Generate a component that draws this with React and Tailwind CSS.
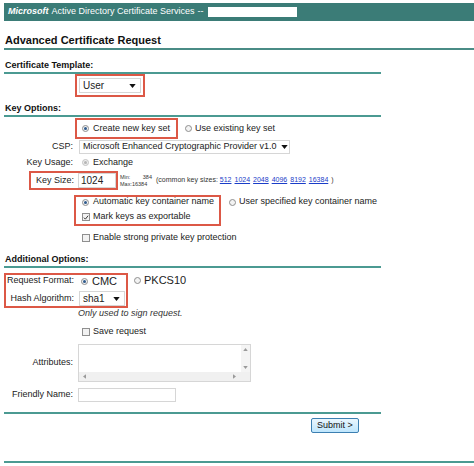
import React from "react";

// Advanced Certificate Request page (AD CS web enrollment), with red annotation boxes
const FONT = { fontFamily: '"Liberation Sans", Arial, sans-serif' };

function Radio({ checked, disabled }) {
  return (
    <span
      className={
        "inline-flex h-[7px] w-[7px] shrink-0 items-center justify-center rounded-full border " +
        (disabled ? "border-[#c4c4c4] bg-[#eeeeee]" : "border-[#8f8f8f] bg-[#f3f3f3]")
      }
    >
      {checked && (
        <span className={"h-[3px] w-[3px] rounded-full " + (disabled ? "bg-[#b5b5b5]" : "bg-[#2f5a8c]")} />
      )}
    </span>
  );
}

function Checkbox({ checked }) {
  return (
    <span className="inline-flex h-[8px] w-[8px] shrink-0 items-center justify-center border border-[#8f8f8f] bg-[#f2f2f2]">
      {checked && (
        <svg viewBox="0 0 8 8" className="h-[7px] w-[7px]">
          <path d="M1.2 4.2 L3.2 6.2 L6.8 1.6" fill="none" stroke="#333" strokeWidth="1.3" />
        </svg>
      )}
    </span>
  );
}

function Select({ children, className }) {
  return (
    <div
      className={
        "flex items-center justify-between border border-[#d6d6d6] bg-white pl-[3px] pr-[4px] text-[9px] text-[#222] " +
        className
      }
    >
      <span className="whitespace-nowrap">{children}</span>
      <svg viewBox="0 0 8 5" className="ml-[4px] h-[4px] w-[7px] shrink-0">
        <path d="M0 0 H8 L4 5 Z" fill="#111" />
      </svg>
    </div>
  );
}

function Section({ title, className }) {
  return (
    <div className={"flex h-[14px] w-[377px] items-center border-b-2 border-[#4b9a92] text-[9px] font-bold text-[#111] " + className}>
      {title}
    </div>
  );
}

function Label({ children, className }) {
  return <div className={"w-[70px] shrink-0 pr-[1px] text-right whitespace-nowrap " + (className || "")}>{children}</div>;
}

export default function App() {
  const sizes = ["512", "1024", "2048", "4096", "8192", "16384"];

  return (
    <div className="min-h-[466px] w-[474px] bg-white pl-[4px] pt-[3px] text-[9px] text-[#222]" style={FONT}>
      {/* banner */}
      <div className="flex h-[18px] items-center bg-[#3b7c77] pl-[4px] text-[9px] text-white">
        <span className="font-bold italic">Microsoft</span>
        <span className="ml-[3px]">Active Directory Certificate Services</span>
        <span className="ml-[3px]">--</span>
        <span className="ml-[4px] h-[10px] w-[89px] bg-white" />
      </div>

      <div className="mt-[12px] flex h-[17px] items-center border-b-2 border-[#4a8c86] pl-[1px] text-[11px] font-bold text-[#111]">
        Advanced Certificate Request
      </div>

      <Section title="Certificate Template:" className="mt-[10px] pl-[1px]" />

      <div className="ml-[71px] w-[70px] border-2 border-[#dc5846] p-[2px]">
        <Select className="h-[15px] w-[62px] text-[10px]">User</Select>
      </div>

      <Section title="Key Options:" className="mt-[6px] pl-[1px]" />

      {/* key set */}
      <div className="mt-[1px] flex h-[21px] items-center">
        <div className="ml-[71px] flex h-[21px] w-[103px] items-center border-2 border-[#dc5846] pl-[5px]">
          <Radio checked />
          <span className="ml-[4px] whitespace-nowrap">Create new key set</span>
        </div>
        <div className="ml-[7px] flex items-center">
          <Radio />
          <span className="ml-[3px] whitespace-nowrap">Use existing key set</span>
        </div>
      </div>

      <div className="flex h-[16px] items-center">
        <Label>CSP:</Label>
        <Select className="ml-[5px] h-[14px] w-[211px]">Microsoft Enhanced Cryptographic Provider v1.0</Select>
      </div>

      <div className="flex h-[15px] items-center">
        <Label>Key Usage:</Label>
        <span className="ml-[8px] flex items-center">
          <Radio checked disabled />
          <span className="ml-[4px]">Exchange</span>
        </span>
      </div>

      {/* key size */}
      <div className="mt-[1px] flex h-[19px] items-center">
        <div className="ml-[25px] flex h-[19px] items-center border-2 border-[#dc5846]">
          <div className="w-[43px] shrink-0 text-right">Key Size:</div>
          <div className="ml-[4px] flex h-[15px] w-[38px] items-center border border-[#d6d6d6] bg-white pl-[2px] text-[10px]">
            1024
          </div>
        </div>
        <div className="ml-[2px] flex w-[32px] flex-col text-[5.5px] leading-[7px] text-[#333]">
          <span className="flex justify-between">
            <span>Min:</span>
            <span>384</span>
          </span>
          <span>Max:16384</span>
        </div>
        <div className="ml-[4px] whitespace-nowrap text-[7px] text-[#333]">
          (common key sizes:{" "}
          {sizes.map((s) => (
            <span key={s} className="mr-[3px] text-[#1a3dc8] underline">
              {s}
            </span>
          ))}
          )
        </div>
      </div>

      {/* container name + exportable */}
      <div className="mt-[5px] flex items-start">
        <div className="ml-[70px] w-[147px] border-2 border-[#dc5846] pb-[2px] pl-[6px]">
          <div className="flex h-[10px] items-center">
            <Radio checked />
            <span className="ml-[4px] whitespace-nowrap">Automatic key container name</span>
          </div>
          <div className="mt-[5px] flex h-[10px] items-center">
            <Checkbox checked />
            <span className="ml-[3px] whitespace-nowrap">Mark keys as exportable</span>
          </div>
        </div>
        <div className="ml-[8px] mt-[2px] flex h-[10px] items-center">
          <Radio />
          <span className="ml-[3px] whitespace-nowrap">User specified key container name</span>
        </div>
      </div>

      <div className="mt-[6px] flex h-[12px] items-center pl-[78px]">
        <Checkbox />
        <span className="ml-[3px] whitespace-nowrap">Enable strong private key protection</span>
      </div>

      <Section title="Additional Options:" className="mt-[10px] pl-[1px]" />

      {/* request format + hash */}
      <div className="mt-[5px] flex items-start">
        <div className="w-[124px] border-2 border-[#dc5846]">
          <div className="flex h-[12px] items-center">
            <div className="w-[68px] shrink-0 text-right">Request Format:</div>
            <span className="ml-[7px] flex items-center">
              <Radio checked />
              <span className="ml-[4px] text-[11px]">CMC</span>
            </span>
          </div>
          <div className="mt-[4px] flex h-[15px] items-center">
            <div className="w-[68px] shrink-0 text-right">Hash Algorithm:</div>
            <Select className="ml-[5px] h-[15px] w-[46px] text-[10px]">sha1</Select>
          </div>
        </div>
        <div className="ml-[6px] flex h-[14px] items-center">
          <Radio />
          <span className="ml-[3px] text-[11px]">PKCS10</span>
        </div>
      </div>

      <div className="flex h-[12px] items-center pl-[74px] italic text-[#333]">Only used to sign request.</div>

      <div className="mt-[6px] flex h-[12px] items-center pl-[78px]">
        <Checkbox />
        <span className="ml-[3px]">Save request</span>
      </div>

      {/* attributes */}
      <div className="mt-[6px] flex h-[38px] items-center">
        <Label>Attributes:</Label>
        <div className="ml-[4px] flex h-[38px] w-[173px] flex-col border border-[#d6d6d6] bg-white">
          <div className="flex flex-1">
            <div className="flex-1" />
            <div className="flex w-[9px] flex-col items-center justify-between bg-[#f4f4f4] py-[3px]">
              <svg viewBox="0 0 6 4" className="h-[3px] w-[5px]">
                <path d="M0 4 L3 0 L6 4 Z" fill="#9a9a9a" />
              </svg>
              <svg viewBox="0 0 6 4" className="h-[3px] w-[5px]">
                <path d="M0 0 L6 0 L3 4 Z" fill="#9a9a9a" />
              </svg>
            </div>
          </div>
          <div className="flex h-[9px] items-center justify-between bg-[#f0f0f0] pl-[4px] pr-[14px]">
            <svg viewBox="0 0 4 6" className="h-[5px] w-[3px]">
              <path d="M4 0 L0 3 L4 6 Z" fill="#9a9a9a" />
            </svg>
            <svg viewBox="0 0 4 6" className="h-[5px] w-[3px]">
              <path d="M0 0 L4 3 L0 6 Z" fill="#9a9a9a" />
            </svg>
          </div>
        </div>
      </div>

      <div className="mt-[6px] flex h-[14px] items-center">
        <Label>Friendly Name:</Label>
        <div className="ml-[4px] h-[14px] w-[98px] border border-[#d6d6d6] bg-white" />
      </div>

      <div className="mt-[10px] w-[377px] border-b-2 border-[#4b9a92]" />

      <div className="mt-[4px] pl-[307px]">
        <div className="flex h-[15px] w-[48px] items-center justify-center rounded-[2px] border border-[#3c7fb1] bg-gradient-to-b from-[#eaf6fd] to-[#bee6fd] text-[9px] text-[#111]">
          Submit &gt;
        </div>
      </div>

      <div className="mt-[28px] border-b-2 border-[#4b9a92]" />
    </div>
  );
}
